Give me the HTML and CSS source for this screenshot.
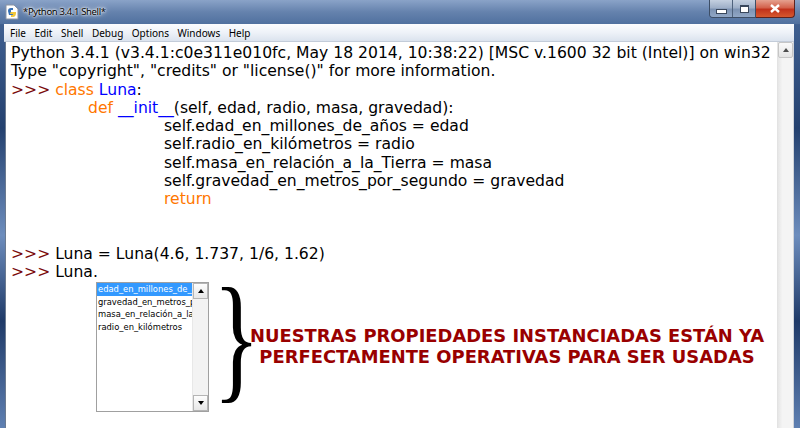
FILE: index.html
```html
<!DOCTYPE html>
<html lang="es">
<head>
    <meta charset="UTF-8">
    <title>*Python 3.4.1 Shell*</title>
    <link rel="stylesheet" href="styles.css">
</head>
<body>
    <div class="window">
        <div class="titlebar">
            <svg class="app_icon" width="14" height="16" viewBox="0 0 14 16">
                <path d="M1 1h8l4 4v10H1z" fill="#fff" stroke="#8a93a3"/>
                <path d="M3 7c0-2 1-3 3-3h2v2H6v2h4c0 2-1 3-3 3H4z" fill="#3670b5"/>
                <path d="M11 9c0 2-1 4-3 4H6v-2h2v-1H5c0-2 1-2 3-2h3z" fill="#f2c73a"/>
            </svg>
            <span class="title">*Python 3.4.1 Shell*</span>
            <div class="controls">
                <div class="ctl_group">
                    <span class="ctl ctl_min"><i></i></span>
                    <span class="ctl ctl_max"><i></i></span>
                </div>
                <span class="ctl ctl_close">
                    <svg width="12" height="9" viewBox="0 0 12 9">
                        <path d="M2 1l8 7M10 1L2 8" stroke="#fff" stroke-width="2.4"/>
                    </svg>
                </span>
            </div>
        </div>
        <div class="menubar">
            <span>File</span>
            <span>Edit</span>
            <span>Shell</span>
            <span>Debug</span>
            <span>Options</span>
            <span>Windows</span>
            <span>Help</span>
        </div>
        <div class="client">
            <div class="shell">
                <div class="line">Python 3.4.1 (v3.4.1:c0e311e010fc, May 18 2014, 10:38:22) [MSC v.1600 32 bit (Intel)] on win32</div>
                <div class="line">Type "copyright", "credits" or "license()" for more information.</div>
                <div class="line"><span class="prompt">&gt;&gt;&gt; </span><span class="kw">class</span> <span class="def">Luna</span>:</div>
                <div class="line ind1"><span class="kw">def</span> <span class="def">__init__</span>(self, edad, radio, masa, gravedad):</div>
                <div class="line ind2">self.edad_en_millones_de_años = edad</div>
                <div class="line ind2">self.radio_en_kilómetros = radio</div>
                <div class="line ind2">self.masa_en_relación_a_la_Tierra = masa</div>
                <div class="line ind2">self.gravedad_en_metros_por_segundo = gravedad</div>
                <div class="line ind2"><span class="kw">return</span></div>
                <div class="line"></div>
                <div class="line"></div>
                <div class="line"><span class="prompt">&gt;&gt;&gt; </span>Luna = Luna(4.6, 1.737, 1/6, 1.62)</div>
                <div class="line"><span class="prompt">&gt;&gt;&gt; </span>Luna.</div>

                <div class="complete">
                    <ul class="complete_list">
                        <li class="selected">edad_en_millones_de_años</li>
                        <li>gravedad_en_metros_por_segundo</li>
                        <li>masa_en_relación_a_la_Tierra</li>
                        <li>radio_en_kilómetros</li>
                    </ul>
                    <div class="mini_scroll">
                        <span class="mini_btn"><i class="tri_up"></i></span>
                        <span class="mini_btn"><i class="tri_down"></i></span>
                    </div>
                </div>

                <div class="note">
                    <span class="brace">}</span>
                    <p class="note_text">NUESTRAS PROPIEDADES INSTANCIADAS ESTÁN YA<br>PERFECTAMENTE OPERATIVAS PARA SER USADAS</p>
                </div>
            </div>
            <div class="vscroll">
                <span class="scroll_btn"><i class="tri_up"></i></span>
            </div>
        </div>
    </div>
</body>
</html>
```

FILE: styles.css
```css
body {
    margin: 0;
    width: 800px;
    height: 428px;
    overflow: hidden;
}

.window {
    display: flex;
    flex-direction: column;
    height: 428px;
    background: linear-gradient(180deg, #6f8cb8 0%, #3f5f90 6%, #24416f 30%, #6d8dbd 55%, #1f3a68 75%, #5f80b2 100%);
}

.titlebar {
    display: flex;
    align-items: flex-start;
    height: 24px;
    padding-left: 5px;
    background: linear-gradient(180deg, #8aa3c8 0%, #6582ad 50%, #50709f 100%);
}

.app_icon {
    margin-top: 4px;
}

.title {
    margin: 5px 0 0 4px;
    font-family: "Noto Sans", sans-serif;
    font-size: 9.5px;
    letter-spacing: -0.35px;
    color: #000;
    text-shadow: 0 0 6px #fff, 0 0 3px #fff, 0 0 2px #fff;
}

.controls {
    display: flex;
    margin-left: auto;
    margin-right: 5px;
}

.ctl_group {
    display: flex;
    border: 1px solid #3d4e66;
    border-top: 0;
    border-radius: 0 0 0 4px;
    overflow: hidden;
}

.ctl {
    display: flex;
    align-items: center;
    justify-content: center;
    height: 17px;
}

.ctl_min,
.ctl_max {
    width: 22px;
    background: linear-gradient(180deg, #c4d0e0 0%, #9fb0c8 45%, #7d93b3 55%, #91a7c6 100%);
}

.ctl_min {
    border-right: 1px solid #4f627c;
}

.ctl_min i {
    display: block;
    width: 9px;
    height: 3px;
    margin-top: 5px;
    background: #fff;
    border: 1px solid #39475c;
}

.ctl_max i {
    display: block;
    width: 7px;
    height: 5px;
    border: 1px solid #39475c;
    border-top-width: 2px;
    background: #fff;
    box-shadow: inset 0 0 0 1px #fff;
}

.ctl_close {
    width: 38px;
    height: 17px;
    border: 1px solid #5c2320;
    border-top: 0;
    border-left: 0;
    border-radius: 0 0 4px 0;
    background: linear-gradient(180deg, #e5a18f 0%, #d3624c 45%, #c1321c 55%, #d6582e 100%);
}

.menubar {
    display: flex;
    align-items: center;
    gap: 8.5px;
    height: 17px;
    margin: 0 6px 0 4px;
    padding-left: 6px;
    border-bottom: 1px solid #c3ccd9;
    background: linear-gradient(180deg, #fbfcfe 0%, #eef2f8 50%, #dbe3ee 100%);
    font-family: "Noto Sans", sans-serif;
    font-size: 10px;
    color: #000;
}

.client {
    flex: 1;
    display: flex;
    min-height: 0;
    margin: 0 6px 0 5px;
}

.shell {
    position: relative;
    flex: 1;
    padding: 2px 0 0 5px;
    background: #fff;
    border-left: 1px solid #6b7a90;
    font-family: "DejaVu Sans", sans-serif;
    font-size: 15.6px;
    color: #000;
}

.line {
    height: 18.25px;
    line-height: 18.25px;
    white-space: pre;
}

.ind1 {
    padding-left: 77px;
}

.ind2 {
    padding-left: 153px;
}

.prompt {
    color: #7a0a0a;
}

.kw {
    color: #ff7700;
}

.def {
    color: #0000ff;
}

.vscroll {
    width: 15px;
    border-left: 1px solid #e3e3e3;
    border-right: 1px solid #d0d4da;
    background: linear-gradient(90deg, #e6e6e6 0%, #f4f4f4 30%, #f4f4f4 100%);
}

.scroll_btn {
    display: flex;
    align-items: center;
    justify-content: center;
    height: 16px;
    border: 1px solid #c6c6c6;
    border-radius: 2px;
    background: linear-gradient(180deg, #fafafa, #e4e4e4);
    box-sizing: border-box;
}

.tri_up,
.tri_down {
    display: block;
    width: 0;
    height: 0;
    border-left: 3px solid transparent;
    border-right: 3px solid transparent;
}

.tri_up {
    border-bottom: 4px solid #4d4d4d;
}

.tri_down {
    border-top: 4px solid #000;
}

/* autocompletion popup */
.complete {
    position: absolute;
    left: 90px;
    top: 240px;
    display: flex;
    width: 113px;
    height: 130px;
    box-sizing: border-box;
    border: 1px solid #a0a0a0;
    background: #fff;
}

.complete_list {
    flex: 1;
    min-width: 0;
    margin: 0;
    padding: 0;
    list-style: none;
    overflow: hidden;
    font-family: "DejaVu Sans Condensed", "DejaVu Sans", sans-serif;
    font-size: 9.3px;
}

.complete_list li {
    height: 12.7px;
    line-height: 12px;
    padding-left: 1px;
    white-space: nowrap;
    overflow: hidden;
}

.complete_list .selected {
    background: #3399ff;
    color: #fff;
}

.mini_scroll {
    display: flex;
    flex-direction: column;
    justify-content: space-between;
    width: 15px;
    background: #f3f3f3;
    border-left: 1px solid #e8e8e8;
}

.mini_btn {
    display: flex;
    align-items: center;
    justify-content: center;
    height: 14px;
    border: 1px solid #b5b5b5;
    background: linear-gradient(180deg, #fdfdfd, #e7e7e7);
}

.mini_btn .tri_up {
    border-bottom-color: #000;
}

/* annotation */
.note {
    position: absolute;
    left: 216px;
    top: 246px;
    display: flex;
    align-items: center;
    height: 116px;
}

.brace {
    display: block;
    width: 26px;
    font-family: "Liberation Serif", serif;
    font-size: 140px;
    line-height: 116px;
    transform: translate(-9px, -9px) scaleX(0.7);
    transform-origin: left center;
}

.note_text {
    width: 518px;
    margin: 0;
    font-family: "DejaVu Sans", sans-serif;
    font-size: 17.9px;
    font-weight: bold;
    line-height: 21px;
    text-align: center;
    color: #900;
}
```
